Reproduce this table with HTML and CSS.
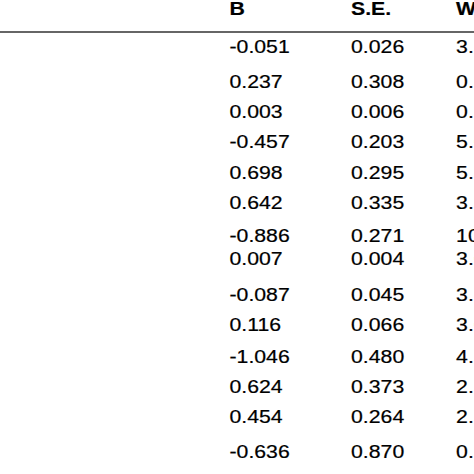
FILE: index.html
```html
<!DOCTYPE html>
<html>
<head>
<meta charset="utf-8">
<link rel="stylesheet" href="styles.css">
</head>
<body>
<div class="table">
  <div class="row head">
    <div class="cell"></div>
    <div class="cell">B</div>
    <div class="cell">S.E.</div>
    <div class="cell">Wald</div>
  </div>
  <div class="rows">
    <div class="row h35"><div class="cell"></div><div class="cell">-0.051</div><div class="cell">0.026</div><div class="cell">3.848</div></div>
    <div class="row"><div class="cell"></div><div class="cell">0.237</div><div class="cell">0.308</div><div class="cell">0.592</div></div>
    <div class="row"><div class="cell"></div><div class="cell">0.003</div><div class="cell">0.006</div><div class="cell">0.250</div></div>
    <div class="row h31"><div class="cell"></div><div class="cell">-0.457</div><div class="cell">0.203</div><div class="cell">5.068</div></div>
    <div class="row"><div class="cell"></div><div class="cell">0.698</div><div class="cell">0.295</div><div class="cell">5.598</div></div>
    <div class="row h33"><div class="cell"></div><div class="cell">0.642</div><div class="cell">0.335</div><div class="cell">3.673</div></div>
    <div class="row h23"><div class="cell"></div><div class="cell">-0.886</div><div class="cell">0.271</div><div class="cell">10.689</div></div>
    <div class="row h36"><div class="cell"></div><div class="cell">0.007</div><div class="cell">0.004</div><div class="cell">3.063</div></div>
    <div class="row"><div class="cell"></div><div class="cell">-0.087</div><div class="cell">0.045</div><div class="cell">3.738</div></div>
    <div class="row h32"><div class="cell"></div><div class="cell">0.116</div><div class="cell">0.066</div><div class="cell">3.089</div></div>
    <div class="row"><div class="cell"></div><div class="cell">-1.046</div><div class="cell">0.480</div><div class="cell">4.749</div></div>
    <div class="row"><div class="cell"></div><div class="cell">0.624</div><div class="cell">0.373</div><div class="cell">2.799</div></div>
    <div class="row h35"><div class="cell"></div><div class="cell">0.454</div><div class="cell">0.264</div><div class="cell">2.957</div></div>
    <div class="row"><div class="cell"></div><div class="cell">-0.636</div><div class="cell">0.870</div><div class="cell">0.534</div></div>
  </div>
</div>
</body>
</html>
```

FILE: styles.css
```css
html, body {
  margin: 0;
  padding: 0;
  background: #ffffff;
  overflow: hidden;
  width: 474px;
  height: 474px;
}

.table {
  width: 402px;
  transform: scaleX(1.18);
  transform-origin: 0 0;
  font-family: "Liberation Sans", Arial, Helvetica, sans-serif;
  font-size: 18px;
  line-height: 18px;
  color: #000000;
  -webkit-text-stroke: 0.2px #000000;
}

.row {
  display: grid;
  grid-template-columns: 194.5px 103px 89px 1fr;
  height: 30px;
  white-space: nowrap;
}

.row.head {
  height: 31px;
  font-weight: bold;
  border-bottom: 2px solid #666666;
}

.rows {
  padding-top: 5px;
}

.row.h23 { height: 23px; }
.row.h31 { height: 31px; }
.row.h32 { height: 32px; }
.row.h33 { height: 33px; }
.row.h35 { height: 35px; }
.row.h36 { height: 36px; }

.cell {
  overflow: visible;
}
```
